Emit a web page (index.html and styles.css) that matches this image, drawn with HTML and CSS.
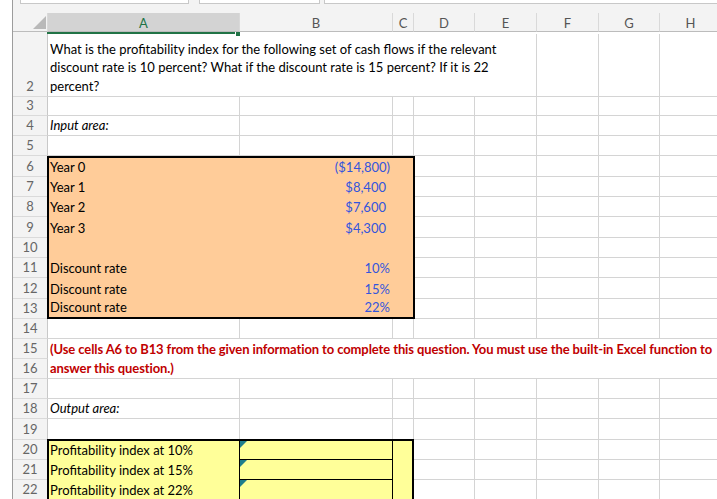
FILE: index.html
```html
<!DOCTYPE html>
<html lang="en">
<head>
<meta charset="utf-8">
<title>Profitability index</title>
<link rel="stylesheet" href="styles.css">
</head>
<body>
<div class="window">
  <div class="chrome">
    <div class="box b1"></div>
    <div class="box b2"></div>
    <div class="box b3"></div>
  </div>
  <div class="sheet">
    <!-- column headers -->
    <div class="ch corner"><svg width="13" height="13" viewBox="0 0 13 13"><polygon points="13,0 13,13 0,13" fill="#b9b9b9"/></svg></div>
    <div class="ch sel">A</div>
    <div class="ch">B</div>
    <div class="ch">C</div>
    <div class="ch">D</div>
    <div class="ch">E</div>
    <div class="ch">F</div>
    <div class="ch">G</div>
    <div class="ch">H</div>
    <!-- selection gap -->
    <div class="gap-rh"></div>
    <div class="sel-line"><span class="handle"></span></div>
    <div class="gap-rest"></div>

    <!-- row 2 -->
    <div class="rh">2</div>
    <div class="c q">What is the profitability index for the following set of cash flows if the relevant<br>discount rate is 10 percent? What if the discount rate is 15 percent? If it is 22<br>percent?</div>
    <div class="c"></div><div class="c"></div><div class="c"></div>
    <!-- row 3 -->
    <div class="rh">3</div>
    <div class="c"></div><div class="c"></div><div class="c"></div><div class="c"></div><div class="c"></div><div class="c"></div><div class="c"></div><div class="c"></div>
    <!-- row 4 -->
    <div class="rh">4</div>
    <div class="c it">Input area:</div>
    <div class="c"></div><div class="c"></div><div class="c"></div><div class="c"></div><div class="c"></div><div class="c"></div><div class="c"></div>
    <!-- row 5 -->
    <div class="rh">5</div>
    <div class="c"></div><div class="c"></div><div class="c"></div><div class="c"></div><div class="c"></div><div class="c"></div><div class="c"></div><div class="c"></div>

    <!-- input block rows 6-13 -->
    <div class="input-box">
      <div class="lbl">Year 0</div><div class="val">($14,800)</div>
      <div class="lbl">Year 1</div><div class="val pos">$8,400</div>
      <div class="lbl">Year 2</div><div class="val pos">$7,600</div>
      <div class="lbl">Year 3</div><div class="val pos">$4,300</div>
      <div class="lbl"></div><div class="val"></div>
      <div class="lbl">Discount rate</div><div class="val">10%</div>
      <div class="lbl">Discount rate</div><div class="val">15%</div>
      <div class="lbl">Discount rate</div><div class="val">22%</div>
    </div>
    <div class="rh">6</div><div class="c"></div><div class="c"></div><div class="c"></div><div class="c"></div><div class="c"></div>
    <div class="rh">7</div><div class="c"></div><div class="c"></div><div class="c"></div><div class="c"></div><div class="c"></div>
    <div class="rh">8</div><div class="c"></div><div class="c"></div><div class="c"></div><div class="c"></div><div class="c"></div>
    <div class="rh">9</div><div class="c"></div><div class="c"></div><div class="c"></div><div class="c"></div><div class="c"></div>
    <div class="rh">10</div><div class="c"></div><div class="c"></div><div class="c"></div><div class="c"></div><div class="c"></div>
    <div class="rh">11</div><div class="c"></div><div class="c"></div><div class="c"></div><div class="c"></div><div class="c"></div>
    <div class="rh">12</div><div class="c"></div><div class="c"></div><div class="c"></div><div class="c"></div><div class="c"></div>
    <div class="rh">13</div><div class="c"></div><div class="c"></div><div class="c"></div><div class="c"></div><div class="c"></div>

    <!-- row 14 -->
    <div class="rh">14</div>
    <div class="c"></div><div class="c"></div><div class="c"></div><div class="c"></div><div class="c"></div><div class="c"></div><div class="c"></div><div class="c"></div>
    <!-- rows 15-16 -->
    <div class="rh">15</div>
    <div class="c note">(Use cells A6 to B13 from the given information to complete this question. You must use the built-in Excel function to<br>answer this question.)</div>
    <div class="rh">16</div>
    <!-- row 17 -->
    <div class="rh">17</div>
    <div class="c"></div><div class="c"></div><div class="c"></div><div class="c"></div><div class="c"></div><div class="c"></div><div class="c"></div><div class="c"></div>
    <!-- row 18 -->
    <div class="rh">18</div>
    <div class="c it">Output area:</div>
    <div class="c"></div><div class="c"></div><div class="c"></div><div class="c"></div><div class="c"></div><div class="c"></div><div class="c"></div>
    <!-- row 19 -->
    <div class="rh">19</div>
    <div class="c"></div><div class="c"></div><div class="c"></div><div class="c"></div><div class="c"></div><div class="c"></div><div class="c"></div><div class="c"></div>

    <!-- output block rows 20-22 -->
    <div class="output-box">
      <div class="lbl">Profitability index at 10%</div>
      <div class="ans"><svg class="flag" width="7" height="7" viewBox="0 0 7 7"><polygon points="0,0 7,0 0,7" fill="#1f7d8c"/></svg></div>
      <div class="pad"></div>
      <div class="lbl">Profitability index at 15%</div>
      <div class="ans"><svg class="flag" width="7" height="7" viewBox="0 0 7 7"><polygon points="0,0 7,0 0,7" fill="#1f7d8c"/></svg></div>
      <div class="pad"></div>
      <div class="lbl">Profitability index at 22%</div>
      <div class="ans last"><svg class="flag" width="7" height="7" viewBox="0 0 7 7"><polygon points="0,0 7,0 0,7" fill="#1f7d8c"/></svg></div>
      <div class="pad"></div>
    </div>
    <div class="rh">20</div><div class="c"></div><div class="c"></div><div class="c"></div><div class="c"></div><div class="c"></div>
    <div class="rh">21</div><div class="c"></div><div class="c"></div><div class="c"></div><div class="c"></div><div class="c"></div>
    <div class="rh">22</div><div class="c"></div><div class="c"></div><div class="c"></div><div class="c"></div><div class="c"></div>
  </div>
</div>
</body>
</html>
```
FILE: styles.css
```css
html, body {
  margin: 0;
  padding: 0;
  background: #ffffff;
}
body {
  width: 717px;
  height: 499px;
  overflow: hidden;
  font-family: "Lato", "Liberation Sans", sans-serif;
  font-size: 13px;
  color: #000000;
}
.window {
  margin-left: 12px;
  border-left: 1px solid #9c9c9c;
  height: 499px;
  overflow: hidden;
}
.chrome {
  height: 13px;
  background: #f3f3f3;
  display: flex;
  align-items: flex-start;
}
.box {
  height: 3px;
  background: #ffffff;
  border: 1px solid #c8c8c8;
  border-top: none;
}
.b1 { margin-left: 7px; width: 167px; }
.b2 { margin-left: 10px; width: 119px; }
.b3 { margin-left: 4px; flex: 1; border-right: none; }

.sheet {
  display: grid;
  grid-template-columns: 35px 192px 153px 21px 61px 62px 62px 61px 62px;
  grid-template-rows: 19px 2px 63px 19px 20px 20px 21px 20px 20px 21px 20px 20px 21px 20px 20px 20px 20px 20px 20px 21px 20px 20px 20px;
  width: 729px;
}
.ch {
  box-sizing: border-box;
  background: #f3f3f3;
  border-right: 1px solid #d9d9d9;
  border-bottom: 1px solid #bcbcbc;
  color: #555555;
  display: flex;
  align-items: center;
  justify-content: center;
  font-size: 13px;
  padding-top: 1px;
}
.ch.sel {
  background: #d3d3d3;
  color: #217346;
}
.ch.corner {
  justify-content: flex-end;
  align-items: flex-end;
  padding: 0 1px 2px 0;
}
.ch.corner svg { display: block; }
.gap-rh {
  background: #f3f3f3;
  border-right: 1px solid #c8c8c8;
  box-sizing: border-box;
}
.sel-line {
  background: #217346;
  position: relative;
  margin-left: -1px;
  margin-right: -1px;
}
.handle {
  position: absolute;
  right: 0;
  top: 0;
  width: 4px;
  height: 4px;
  background: #217346;
  border: 1px solid #ffffff;
  border-top: none;
}
.gap-rest { grid-column: span 7; }

.rh {
  box-sizing: border-box;
  background: #f3f3f3;
  border-right: 1px solid #c8c8c8;
  border-bottom: 1px solid #dadada;
  color: #666666;
  display: flex;
  align-items: flex-end;
  justify-content: center;
  line-height: 18px;
  padding-bottom: 1px;
}
.c {
  box-sizing: border-box;
  border-right: 1px solid #d4d4d4;
  border-bottom: 1px solid #d4d4d4;
  display: flex;
  align-items: flex-end;
  padding: 0 2px 1px 2px;
  line-height: 18px;
  white-space: nowrap;
}
.it { font-style: italic; }
.q {
  grid-column: span 5;
  align-self: stretch;
  display: flex;
  flex-direction: column;
  justify-content: flex-end;
  align-items: flex-start;
  line-height: 18.3px;
}
.note {
  grid-column: span 8;
  grid-row: span 2;
  display: block;
  padding-top: 1px;
  color: #c00000;
  font-weight: bold;
  letter-spacing: -0.1px;
  line-height: 19.3px;
  overflow: hidden;
  border-right: none;
}

.input-box {
  grid-column: 2 / span 3;
  grid-row: 7 / span 8;
  margin: 0 -1px 0 -1px;
  border: 2px solid #000000;
  background: #ffcc99;
  display: grid;
  grid-template-columns: 1fr auto;
  grid-template-rows: 19px 20px 20px 21px 20px 20px 21px 18px;
  z-index: 1;
}
.input-box .lbl,
.input-box .val {
  display: flex;
  align-items: flex-end;
  line-height: 18px;
  padding-bottom: 1px;
  white-space: nowrap;
}
.input-box .lbl { padding-left: 1px; }
.input-box .val {
  justify-content: flex-end;
  padding-right: 23px;
  color: #3355dd;
}
.input-box .val.pos { padding-right: 27px; }

.output-box {
  grid-column: 2 / span 3;
  grid-row: 21 / span 3;
  margin: -1px 0 0 -1px;
  border: 2px solid #000000;
  border-bottom: none;
  background: #ffff99;
  display: grid;
  grid-template-columns: 190px 154px 19px;
  grid-template-rows: 19px 20px 20px;
  z-index: 1;
}
.output-box .lbl {
  display: flex;
  align-items: flex-end;
  line-height: 18px;
  padding-bottom: 1px;
  padding-left: 1px;
  white-space: nowrap;
}
.output-box .ans {
  box-sizing: border-box;
  border-left: 1px solid #000000;
  border-right: 1px solid #000000;
  border-bottom: 1px solid #000000;
  position: relative;
}
.output-box .ans.last { border-bottom: none; }
.flag {
  display: block;
}
```
